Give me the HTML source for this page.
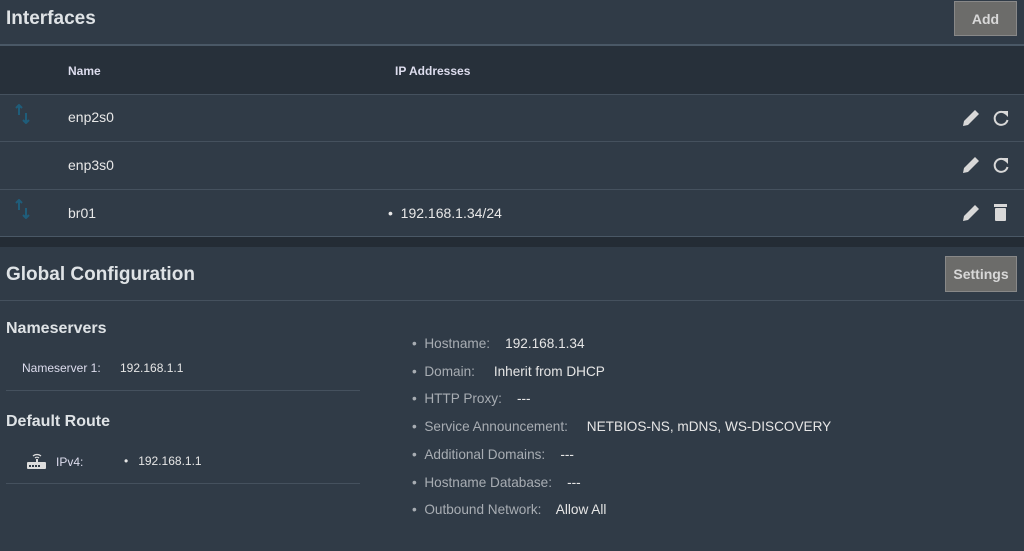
<!DOCTYPE html>
<html><head><meta charset="utf-8"><style>
*{margin:0;padding:0;box-sizing:border-box}
body{width:1024px;height:551px;background:#303b47;font-family:"Liberation Sans",sans-serif;color:#e6e6e6;position:relative;overflow:hidden}
.abs{position:absolute}
h1{position:absolute;font-size:19px;font-weight:bold;color:#dfe3e6;left:6px}
.btn{position:absolute;background:#6c6c6a;border:1px solid #888;color:#d8d8d8;font-size:14px;font-weight:bold;display:flex;align-items:center;justify-content:center}
.line{position:absolute;left:0;width:1024px;height:1px;background:#45515e}
.row{position:absolute;left:0;width:1024px;font-size:14px;color:#e8e8e8}
.lbl{color:#a8adb3}
</style></head><body>
<h1 style="top:8px">Interfaces</h1>
<div class="btn" style="left:954px;top:1px;width:63px;height:35px">Add</div>
<div class="line" style="top:44px;height:2px;background:#4a5866"></div>
<div class="abs" style="left:0;top:46px;width:1024px;height:48px;background:#27303a"></div>
<div class="abs" style="left:68px;top:64px;font-size:12px;font-weight:bold;color:#dde">Name</div>
<div class="abs" style="left:395px;top:64px;font-size:12px;font-weight:bold;color:#dde">IP Addresses</div>
<div class="line" style="top:94px"></div>
<div class="line" style="top:141px"></div>
<div class="line" style="top:189px"></div>
<div class="abs" style="left:0;top:236px;width:1024px;height:11px;background:#242c35;border-top:1px solid #4a5866"></div>

<svg class="abs" style="left:14px;top:104px" width="18" height="20"><path d="M5 1v10M2 4l3-3 3 3M12 9v10M9 16l3 3 3-3" stroke="#1f5d7a" stroke-width="2" fill="none"/></svg>
<svg class="abs" style="left:14px;top:199px" width="18" height="20"><path d="M5 1v10M2 4l3-3 3 3M12 9v10M9 16l3 3 3-3" stroke="#1f5d7a" stroke-width="2" fill="none"/></svg>
<div class="row" style="top:109px;left:68px">enp2s0</div>
<div class="row" style="top:157px;left:68px">enp3s0</div>
<div class="row" style="top:205px;left:68px">br01</div>
<div class="row" style="top:205px;left:388px">•&nbsp; 192.168.1.34/24</div>

<svg class="abs" style="left:961px;top:108px" width="20" height="20"><path d="M2 18l1-5L14 2l4 4L7 17z" fill="#d8d8d8"/></svg>
<svg class="abs" style="left:961px;top:155px" width="20" height="20"><path d="M2 18l1-5L14 2l4 4L7 17z" fill="#d8d8d8"/></svg>
<svg class="abs" style="left:961px;top:203px" width="20" height="20"><path d="M2 18l1-5L14 2l4 4L7 17z" fill="#d8d8d8"/></svg>
<svg class="abs" style="left:991px;top:108px" width="20" height="20"><path d="M15 6A6.5 6.5 0 1 0 16.5 12" stroke="#d8d8d8" stroke-width="2" fill="none"/><path d="M11 3h6v6z" fill="#d8d8d8"/></svg>
<svg class="abs" style="left:991px;top:155px" width="20" height="20"><path d="M15 6A6.5 6.5 0 1 0 16.5 12" stroke="#d8d8d8" stroke-width="2" fill="none"/><path d="M11 3h6v6z" fill="#d8d8d8"/></svg>
<svg class="abs" style="left:991px;top:202px" width="20" height="22"><rect x="3" y="2" width="13" height="3" fill="#d8d8d8"/><rect x="4" y="6" width="11" height="13" rx="1" fill="#d8d8d8"/></svg>

<h1 style="top:264px">Global Configuration</h1>
<div class="btn" style="left:945px;top:256px;width:72px;height:36px">Settings</div>
<div class="line" style="top:300px"></div>

<div class="abs" style="left:6px;top:320px;font-size:16px;font-weight:bold;color:#dfe3e6">Nameservers</div>
<div class="abs" style="left:22px;top:361px;font-size:12px;color:#dde">Nameserver 1:</div>
<div class="abs" style="left:120px;top:361px;font-size:12px">192.168.1.1</div>
<div class="abs" style="left:6px;top:390px;width:354px;height:1px;background:#45515e"></div>
<div class="abs" style="left:6px;top:413px;font-size:16px;font-weight:bold;color:#dfe3e6">Default Route</div>
<svg class="abs" style="left:26px;top:451px" width="22" height="20"><path d="M7 5a6 6 0 0 1 8 0M9 7a3 3 0 0 1 4 0" stroke="#ddd" stroke-width="1.2" fill="none"/><rect x="10" y="8" width="2" height="4" fill="#ddd"/><rect x="1" y="11" width="19" height="7" rx="1" fill="#ddd"/><g fill="#303b47"><rect x="3" y="14" width="2" height="2"/><rect x="6" y="14" width="2" height="2"/><rect x="9" y="14" width="2" height="2"/><rect x="12" y="14" width="2" height="2"/></g></svg>
<div class="abs" style="left:56px;top:455px;font-size:12px;color:#dde">IPv4:</div>
<div class="abs" style="left:124px;top:454px;font-size:12px">•&nbsp;&nbsp; 192.168.1.1</div>
<div class="abs" style="left:6px;top:483px;width:354px;height:1px;background:#45515e"></div>

<div class="abs" style="left:412px;top:330px;font-size:13.6px;line-height:27.7px">
<div><span class="lbl">•&nbsp;&nbsp;Hostname:</span>&nbsp;&nbsp;&nbsp; 192.168.1.34</div>
<div><span class="lbl">•&nbsp;&nbsp;Domain:</span>&nbsp;&nbsp;&nbsp;&nbsp; Inherit from DHCP</div>
<div><span class="lbl">•&nbsp;&nbsp;HTTP Proxy:</span>&nbsp;&nbsp;&nbsp; ---</div>
<div><span class="lbl">•&nbsp;&nbsp;Service Announcement:</span>&nbsp;&nbsp;&nbsp;&nbsp; NETBIOS-NS, mDNS, WS-DISCOVERY</div>
<div><span class="lbl">•&nbsp;&nbsp;Additional Domains:</span>&nbsp;&nbsp;&nbsp; ---</div>
<div><span class="lbl">•&nbsp;&nbsp;Hostname Database:</span>&nbsp;&nbsp;&nbsp; ---</div>
<div><span class="lbl">•&nbsp;&nbsp;Outbound Network:</span>&nbsp;&nbsp;&nbsp; Allow All</div>
</div>
</body></html>
